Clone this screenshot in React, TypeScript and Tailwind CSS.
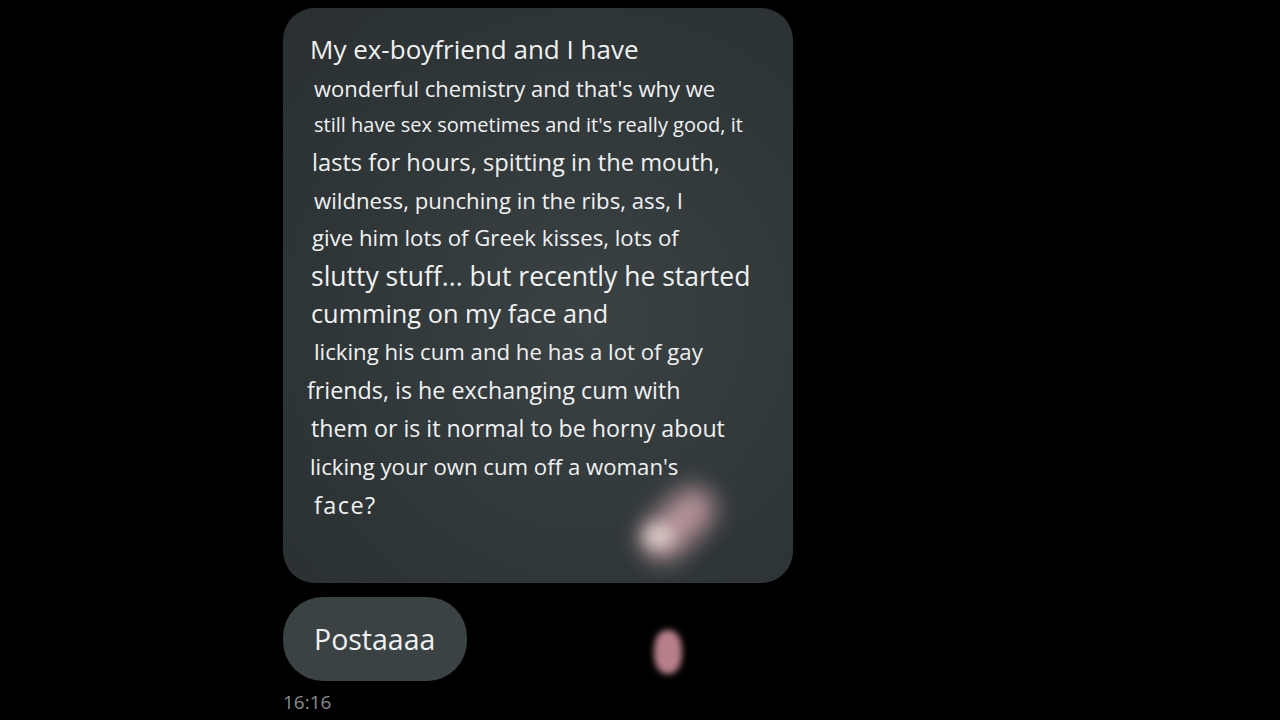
const lines = [
  { text: "My ex-boyfriend and I have", cls: "text-[26px] ml-[27px] h-[41px]" },
  { text: "wonderful chemistry and that's why we", cls: "text-[22px] ml-[31px] h-[38px]" },
  { text: "still have sex sometimes and it's really good, it", cls: "text-[20px] ml-[31px] h-[36px]" },
  { text: "lasts for hours, spitting in the mouth,", cls: "text-[23.7px] ml-[29px] h-[39px]" },
  { text: "wildness, punching in the ribs, ass, I", cls: "text-[22.2px] ml-[31px] h-[38px]" },
  { text: "give him lots of Greek kisses, lots of", cls: "text-[22.2px] ml-[29px] h-[37px]" },
  { text: "slutty stuff... but recently he started", cls: "text-[26.5px] ml-[28px] h-[38px]" },
  { text: "cumming on my face and", cls: "text-[25.3px] ml-[28px] h-[38px]" },
  { text: "licking his cum and he has a lot of gay", cls: "text-[22.2px] ml-[31px] h-[39px]" },
  { text: "friends, is he exchanging cum with", cls: "text-[23.3px] ml-[24px] h-[38px]" },
  { text: "them or is it normal to be horny about", cls: "text-[23.2px] ml-[28px] h-[38px]" },
  { text: "licking your own cum off a woman's", cls: "text-[22.2px] ml-[27px] h-[38px]" },
  { text: "face?", cls: "text-[23.5px] ml-[31px] h-[39px] tracking-[0.06em]" },
];

export default function App() {
  return (
    <div
      className="w-[1280px] h-[720px] bg-black overflow-hidden relative"
      style={{ fontFamily: "'Open Sans', Roboto, sans-serif" }}
    >
      <div className="ml-[283px] pt-[8px] flex flex-col items-start">
        <div className="relative w-[510px] h-[575px] rounded-[32px] bg-[radial-gradient(ellipse_at_60%_55%,#3a4244_0%,#2f3638_60%,#2a3032_100%)] pt-[20px] text-[#f1f1f1] overflow-hidden">
          {lines.map((l, i) => (
            <div key={i} className={`${l.cls} flex items-center whitespace-nowrap leading-none`}>
              {l.text}
            </div>
          ))}
          <div className="absolute left-[352px] top-[494px] w-[86px] h-[44px] rounded-full bg-[#e3b2ba] opacity-75 blur-[12px] -rotate-[45deg]" />
          <div className="absolute left-[360px] top-[516px] w-[30px] h-[24px] rounded-full bg-[#efe6de] opacity-70 blur-[8px]" />
        </div>
        <div className="mt-[14px] w-[184px] h-[84px] rounded-[40px] bg-[#3a4244] text-[#f1f1f1] text-[28.5px] flex items-center pl-[31px]">
          Postaaaa
        </div>
        <div className="mt-[12px] text-[#8a8d8f] text-[19px] leading-none">16:16</div>
      </div>
      <div className="absolute left-[654px] top-[630px] w-[28px] h-[44px] rounded-[45%] bg-[#b77f88] blur-[3px]" />
    </div>
  );
}
